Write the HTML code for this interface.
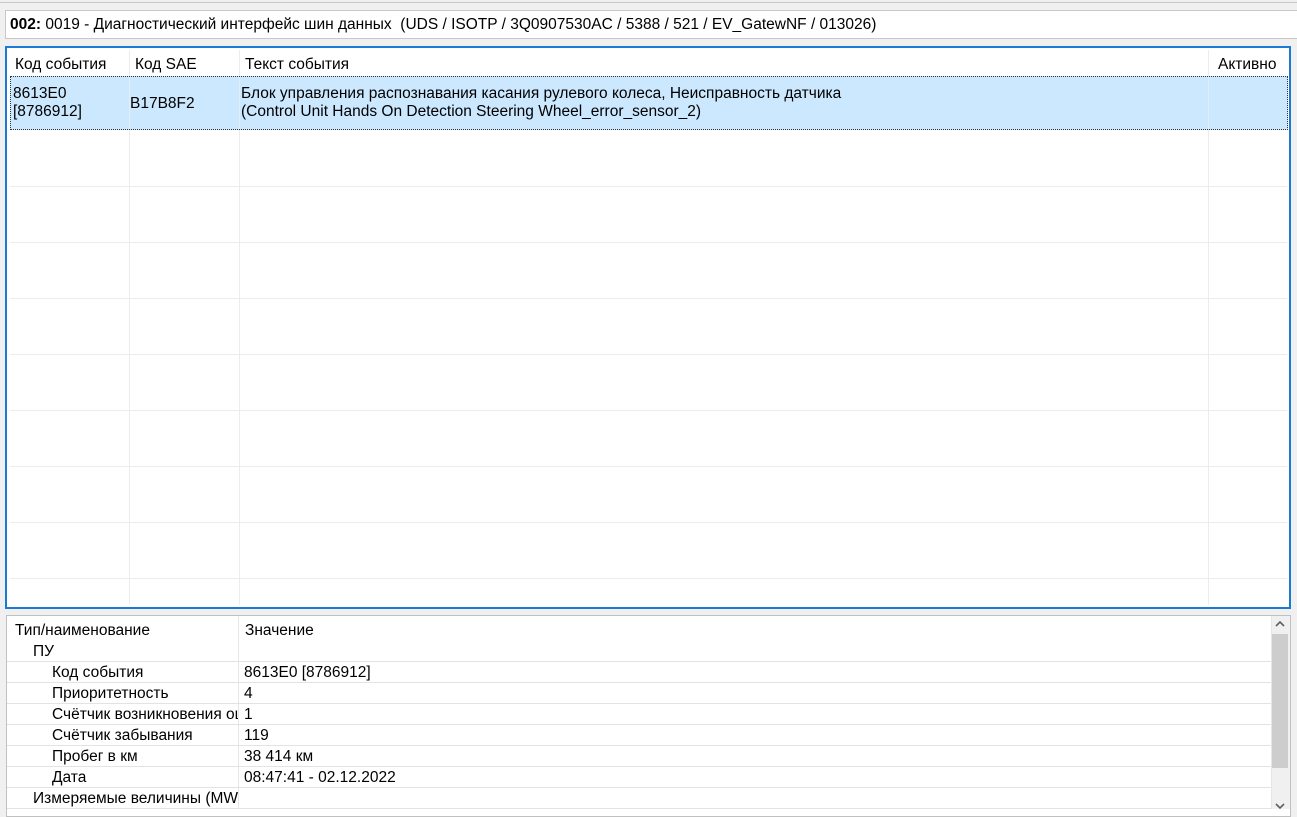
<!DOCTYPE html>
<html><head><meta charset="utf-8"><style>
body{margin:0;width:1297px;height:809px;background:#f0f0f0;font-family:"Liberation Sans",sans-serif;font-size:15.5px;color:#000;position:relative;overflow:hidden}
.a{position:absolute}
.t{position:absolute;white-space:nowrap;line-height:17px}
</style></head><body>
<div class="a" style="left:0;top:2px;width:1297px;height:1px;background:#c8c8c8"></div>
<div class="a" style="left:5px;top:10px;width:1292px;height:27px;background:#fff;border:1px solid #c8c8c8;border-right:none"></div>
<div class="t" style="left:10px;top:16px"><b>002:</b> 0019 - Диагностический интерфейс шин данных&nbsp; (UDS / ISOTP / 3Q0907530AC / 5388 / 521 / EV_GatewNF / 013026)</div>

<div class="a" style="left:5px;top:46px;width:1282px;height:559px;background:#fff;border:2px solid #1a7ad6"></div>
<div class="a" style="left:129px;top:50px;width:1px;height:555px;background:#ececec"></div>
<div class="a" style="left:239px;top:50px;width:1px;height:555px;background:#ececec"></div>
<div class="a" style="left:1208px;top:50px;width:1px;height:555px;background:#ececec"></div>
<div class="t" style="left:15px;top:56px">Код события</div>
<div class="t" style="left:135px;top:56px">Код SAE</div>
<div class="t" style="left:245px;top:56px">Текст события</div>
<div class="t" style="left:1218px;top:56px">Активно</div>
<div class="a" style="left:10px;top:76px;width:1276px;height:52px;background:#cce8ff;border:1px dotted #333"></div>
<div class="a" style="left:129px;top:77px;width:1px;height:52px;background:#e4eef8"></div>
<div class="a" style="left:239px;top:77px;width:1px;height:52px;background:#e4eef8"></div>
<div class="a" style="left:1208px;top:77px;width:1px;height:52px;background:#e4eef8"></div>
<div class="t" style="left:13px;top:85px;line-height:18px">8613E0<br>[8786912]</div>
<div class="t" style="left:130px;top:95px">B17B8F2</div>
<div class="t" style="left:241px;top:85px;line-height:18px">Блок управления распознавания касания рулевого колеса, Неисправность датчика<br>(Control Unit Hands On Detection Steering Wheel_error_sensor_2)</div>
<div class="a" style="left:10px;top:186px;width:1277px;height:1px;background:#ececec"></div>
<div class="a" style="left:10px;top:242px;width:1277px;height:1px;background:#ececec"></div>
<div class="a" style="left:10px;top:298px;width:1277px;height:1px;background:#ececec"></div>
<div class="a" style="left:10px;top:354px;width:1277px;height:1px;background:#ececec"></div>
<div class="a" style="left:10px;top:410px;width:1277px;height:1px;background:#ececec"></div>
<div class="a" style="left:10px;top:466px;width:1277px;height:1px;background:#ececec"></div>
<div class="a" style="left:10px;top:522px;width:1277px;height:1px;background:#ececec"></div>
<div class="a" style="left:10px;top:578px;width:1277px;height:1px;background:#ececec"></div>

<div class="a" style="left:6px;top:615px;width:1283px;height:200px;background:#fff;border:1px solid #c0c0c0"></div>
<div class="a" style="left:238px;top:616px;width:1px;height:193px;background:#e6e6e6"></div>
<div class="a" style="left:7px;top:661px;width:1264px;height:1px;background:#e3e3e3"></div>
<div class="a" style="left:7px;top:682px;width:1264px;height:1px;background:#e3e3e3"></div>
<div class="a" style="left:7px;top:703px;width:1264px;height:1px;background:#e3e3e3"></div>
<div class="a" style="left:7px;top:724px;width:1264px;height:1px;background:#e3e3e3"></div>
<div class="a" style="left:7px;top:745px;width:1264px;height:1px;background:#e3e3e3"></div>
<div class="a" style="left:7px;top:766px;width:1264px;height:1px;background:#e3e3e3"></div>
<div class="a" style="left:7px;top:787px;width:1264px;height:1px;background:#e3e3e3"></div>
<div class="a" style="left:7px;top:808px;width:1264px;height:1px;background:#e3e3e3"></div>
<div class="a" style="left:1271px;top:616px;width:18px;height:193px;background:#f0f0f0;border-left:1px solid #e6e6e6"></div>
<div class="a" style="left:1272px;top:634px;width:16px;height:134px;background:#cdcdcd"></div>
<svg class="a" style="left:1274px;top:619px" width="12" height="10"><path d="M2 7 L6 3 L10 7" fill="none" stroke="#606060" stroke-width="1.6"/></svg>
<svg class="a" style="left:1274px;top:802px" width="12" height="7"><path d="M2 2 L6 6 L10 2" fill="none" stroke="#606060" stroke-width="1.6"/></svg>
<div class="a" style="left:7px;top:616px;width:231px;height:193px;overflow:hidden">
<div class="t" style="left:8px;top:6px">Тип/наименование</div>
<div class="t" style="left:26px;top:27px">ПУ</div>
<div class="t" style="left:45px;top:48px">Код события</div>
<div class="t" style="left:45px;top:69px">Приоритетность</div>
<div class="t" style="left:45px;top:90px">Счётчик возникновения ошибки</div>
<div class="t" style="left:45px;top:111px">Счётчик забывания</div>
<div class="t" style="left:45px;top:132px">Пробег в км</div>
<div class="t" style="left:45px;top:153px">Дата</div>
<div class="t" style="left:26px;top:174px">Измеряемые величины (MWB)</div>
</div>
<div class="t" style="left:245px;top:622px">Значение</div>
<div class="t" style="left:244px;top:664px">8613E0 [8786912]</div>
<div class="t" style="left:244px;top:685px">4</div>
<div class="t" style="left:244px;top:706px">1</div>
<div class="t" style="left:244px;top:727px">119</div>
<div class="t" style="left:244px;top:748px">38 414 км</div>
<div class="t" style="left:244px;top:769px">08:47:41 - 02.12.2022</div>
</body></html>
